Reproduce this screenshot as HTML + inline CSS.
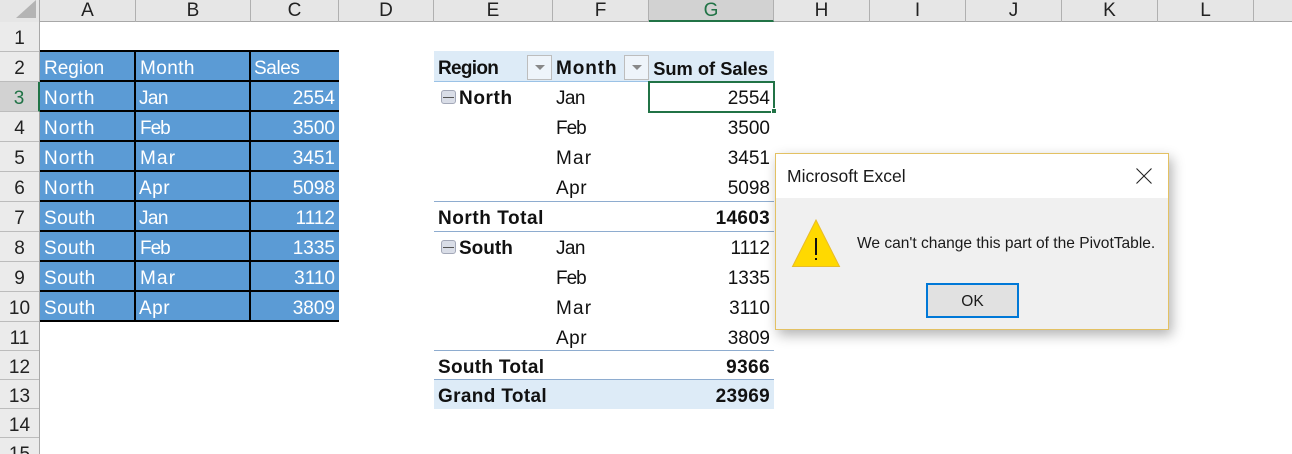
<!DOCTYPE html>
<html><head><meta charset="utf-8">
<style>
html,body{margin:0;padding:0;width:1292px;height:454px;overflow:hidden;background:#fff}
body{position:relative;font-family:"Liberation Sans",sans-serif;color:#111}
div{position:absolute;box-sizing:border-box}
.hb{background:#e6e6e6}
.ch,.rh{font-size:19px;text-align:center;color:#222}
.ch{top:0;height:22px;line-height:21px;border-right:1px solid #b0b0b0}
.rh{left:0;width:39px;line-height:33px;background:#ebebeb;border-bottom:1px solid #bcbcbc;overflow:hidden}
.t{font-size:19px;line-height:30px;height:30px;white-space:nowrap;margin-top:2px}
.w{color:#fff}
.r{text-align:right}
.b{font-weight:bold}
.k{background:#000}
.l{background:#8eaccf;height:1px}
.btn{width:25px;height:25px;top:55px;background:#eef4fa;border:1px solid #bdbdbd}
.btn:after{content:"";position:absolute;left:7px;top:9px;border-left:5px solid transparent;border-right:5px solid transparent;border-top:5px solid #888}
.col{left:441px;width:15px;height:14px;background:#d9dde7;border:1px solid #a3a8b8;border-radius:3px}
.col:after{content:"";position:absolute;left:1px;right:1px;top:6px;height:1px;background:#555}
.n{letter-spacing:1px}.so{letter-spacing:.4px}.mo{letter-spacing:.4px}.sa{letter-spacing:-.4px}
.ja{letter-spacing:-.6px}.fe{letter-spacing:-1px}.ma{letter-spacing:1.2px}.ap{letter-spacing:.5px}
</style></head><body>

<div class="hb" style="left:0;top:0;width:1292px;height:22px;border-bottom:1px solid #a8a8a8"></div>
<div class="hb" style="left:0;top:0;width:40px;height:454px;border-right:1px solid #a8a8a8"></div>
<svg style="position:absolute;left:15px;top:0" width="22" height="19"><polygon points="21,0 21,18 1,18" fill="#b4b4b4"/></svg>

<div class="ch" style="left:40px;width:96px;top:0">A</div>
<div class="ch" style="left:136px;width:115px">B</div>
<div class="ch" style="left:251px;width:88px">C</div>
<div class="ch" style="left:339px;width:95px">D</div>
<div class="ch" style="left:434px;width:119px">E</div>
<div class="ch" style="left:553px;width:96px">F</div>
<div class="ch" style="left:649px;width:125px;background:#d2d2d2;color:#217346;border-bottom:2px solid #217346">G</div>
<div class="ch" style="left:774px;width:96px">H</div>
<div class="ch" style="left:870px;width:96px">I</div>
<div class="ch" style="left:966px;width:96px">J</div>
<div class="ch" style="left:1062px;width:96px">K</div>
<div class="ch" style="left:1158px;width:96px">L</div>

<div class="rh" style="top:22px;height:30px">1</div>
<div class="rh" style="top:52px;height:30px">2</div>
<div class="rh" style="top:82px;height:30px;background:#d2d2d2;color:#217346;width:40px;border-right:2px solid #217346">3</div>
<div class="rh" style="top:112px;height:30px">4</div>
<div class="rh" style="top:142px;height:30px">5</div>
<div class="rh" style="top:172px;height:30px">6</div>
<div class="rh" style="top:202px;height:30px">7</div>
<div class="rh" style="top:232px;height:30px">8</div>
<div class="rh" style="top:262px;height:30px">9</div>
<div class="rh" style="top:292px;height:30px">10</div>
<div class="rh" style="top:322px;height:29px">11</div>
<div class="rh" style="top:351px;height:29px">12</div>
<div class="rh" style="top:380px;height:29px">13</div>
<div class="rh" style="top:409px;height:29px">14</div>
<div class="rh" style="top:438px;height:29px">15</div>

<!-- source table -->
<div style="left:40px;top:51px;width:299px;height:270px;background:#5b9bd5"></div>
<div class="k" style="left:40px;top:50px;width:299px;height:2px"></div>
<div class="k" style="left:40px;top:80px;width:299px;height:2px"></div>
<div class="k" style="left:40px;top:110px;width:299px;height:2px"></div>
<div class="k" style="left:40px;top:140px;width:299px;height:2px"></div>
<div class="k" style="left:40px;top:170px;width:299px;height:2px"></div>
<div class="k" style="left:40px;top:200px;width:299px;height:2px"></div>
<div class="k" style="left:40px;top:230px;width:299px;height:2px"></div>
<div class="k" style="left:40px;top:260px;width:299px;height:2px"></div>
<div class="k" style="left:40px;top:290px;width:299px;height:2px"></div>
<div class="k" style="left:40px;top:320px;width:299px;height:2px"></div>
<div class="k" style="left:134px;top:50px;width:2px;height:271px"></div>
<div class="k" style="left:249px;top:50px;width:2px;height:271px"></div>

<div class="t w" style="left:44px;top:52px">Region</div><div class="t w mo" style="left:140px;top:52px">Month</div><div class="t w sa" style="left:254px;top:52px">Sales</div>
<div class="t w n" style="left:44px;top:82px">North</div><div class="t w ja" style="left:139px;top:82px">Jan</div><div class="t w r" style="left:251px;width:84px;top:82px">2554</div>
<div class="t w n" style="left:44px;top:112px">North</div><div class="t w fe" style="left:140px;top:112px">Feb</div><div class="t w r" style="left:251px;width:84px;top:112px">3500</div>
<div class="t w n" style="left:44px;top:142px">North</div><div class="t w ma" style="left:140px;top:142px">Mar</div><div class="t w r" style="left:251px;width:84px;top:142px">3451</div>
<div class="t w n" style="left:44px;top:172px">North</div><div class="t w ap" style="left:139px;top:172px">Apr</div><div class="t w r" style="left:251px;width:84px;top:172px">5098</div>
<div class="t w so" style="left:44px;top:202px">South</div><div class="t w ja" style="left:139px;top:202px">Jan</div><div class="t w r" style="left:251px;width:84px;top:202px">1112</div>
<div class="t w so" style="left:44px;top:232px">South</div><div class="t w fe" style="left:140px;top:232px">Feb</div><div class="t w r" style="left:251px;width:84px;top:232px">1335</div>
<div class="t w so" style="left:44px;top:262px">South</div><div class="t w ma" style="left:140px;top:262px">Mar</div><div class="t w r" style="left:251px;width:84px;top:262px">3110</div>
<div class="t w so" style="left:44px;top:292px">South</div><div class="t w ap" style="left:139px;top:292px">Apr</div><div class="t w r" style="left:251px;width:84px;top:292px">3809</div>

<!-- pivot -->
<div style="left:434px;top:51px;width:340px;height:30px;background:#ddebf7"></div>
<div style="left:434px;top:81px;width:340px;height:1px;background:#9bc2e6"></div>
<div style="left:434px;top:380px;width:340px;height:29px;background:#ddebf7"></div>
<div class="l" style="left:434px;top:201px;width:340px"></div>
<div class="l" style="left:434px;top:231px;width:340px"></div>
<div class="l" style="left:434px;top:350px;width:340px"></div>
<div class="l" style="left:434px;top:379px;width:340px"></div>

<div class="btn" style="left:527px"></div>
<div class="btn" style="left:624px"></div>
<div class="col" style="top:90px"></div>
<div class="col" style="top:240px"></div>

<div class="t b" style="left:438px;top:52px;letter-spacing:-.7px">Region</div><div class="t b" style="left:556px;top:52px;letter-spacing:.9px">Month</div><div class="t b r" style="left:649px;width:119px;top:52px;font-size:18.3px">Sum of Sales</div>
<div class="t b" style="left:459px;top:82px;letter-spacing:.6px">North</div><div class="t ja" style="left:556px;top:82px">Jan</div><div class="t r" style="left:649px;width:121px;top:82px">2554</div>
<div class="t fe" style="left:556px;top:112px">Feb</div><div class="t r" style="left:649px;width:121px;top:112px">3500</div>
<div class="t ma" style="left:556px;top:142px">Mar</div><div class="t r" style="left:649px;width:121px;top:142px">3451</div>
<div class="t ap" style="left:556px;top:172px">Apr</div><div class="t r" style="left:649px;width:121px;top:172px">5098</div>
<div class="t b" style="left:438px;top:202px;letter-spacing:.55px">North Total</div><div class="t b r" style="left:649px;width:121px;top:202px;letter-spacing:.3px">14603</div>
<div class="t b" style="left:459px;top:232px">South</div><div class="t ja" style="left:556px;top:232px">Jan</div><div class="t r" style="left:649px;width:121px;top:232px">1112</div>
<div class="t fe" style="left:556px;top:262px">Feb</div><div class="t r" style="left:649px;width:121px;top:262px">1335</div>
<div class="t ma" style="left:556px;top:292px">Mar</div><div class="t r" style="left:649px;width:121px;top:292px">3110</div>
<div class="t ap" style="left:556px;top:322px">Apr</div><div class="t r" style="left:649px;width:121px;top:322px">3809</div>
<div class="t b" style="left:438px;top:351px;letter-spacing:.3px">South Total</div><div class="t b r" style="left:649px;width:121px;top:351px;letter-spacing:.4px">9366</div>
<div class="t b" style="left:438px;top:380px;letter-spacing:.35px">Grand Total</div><div class="t b r" style="left:649px;width:121px;top:380px;letter-spacing:.3px">23969</div>

<!-- selection -->
<div style="left:648px;top:81px;width:127px;height:32px;border:2px solid #217346"></div>
<div style="left:771px;top:108px;width:6px;height:6px;background:#217346;border:1px solid #fff"></div>

<!-- dialog -->
<div style="left:775px;top:153px;width:394px;height:177px;background:#f0f0f0;border:1px solid #e3c163;box-shadow:3px 5px 12px rgba(0,0,0,.3)"></div>
<div style="left:776px;top:154px;width:392px;height:44px;background:#fff"></div>
<div style="left:787px;top:162px;font-size:17.5px;line-height:28px;white-space:nowrap;color:#1a1a1a">Microsoft Excel</div>
<svg style="position:absolute;left:1134px;top:166px" width="20" height="20"><path d="M2.5 2.5L17.5 17.5M17.5 2.5L2.5 17.5" stroke="#222" stroke-width="1.1" fill="none"/></svg>
<svg style="position:absolute;left:790px;top:218px" width="52" height="52"><polygon points="26,2 2.5,48.5 49.5,48.5" fill="#ffd900" stroke="#e8bc2a" stroke-width="1"/><rect x="25" y="20" width="2" height="17" fill="#111"/><rect x="25" y="40" width="2" height="2" fill="#111"/></svg>
<div style="left:857px;top:232px;font-size:15.55px;line-height:24px;white-space:nowrap;color:#1a1a1a">We can't change this part of the PivotTable.</div>
<div style="left:926px;top:283px;width:93px;height:35px;background:#e1e1e1;border:2px solid #0078d7;text-align:center;font-size:15.5px;line-height:34px;color:#1a1a1a">OK</div>
</body></html>
